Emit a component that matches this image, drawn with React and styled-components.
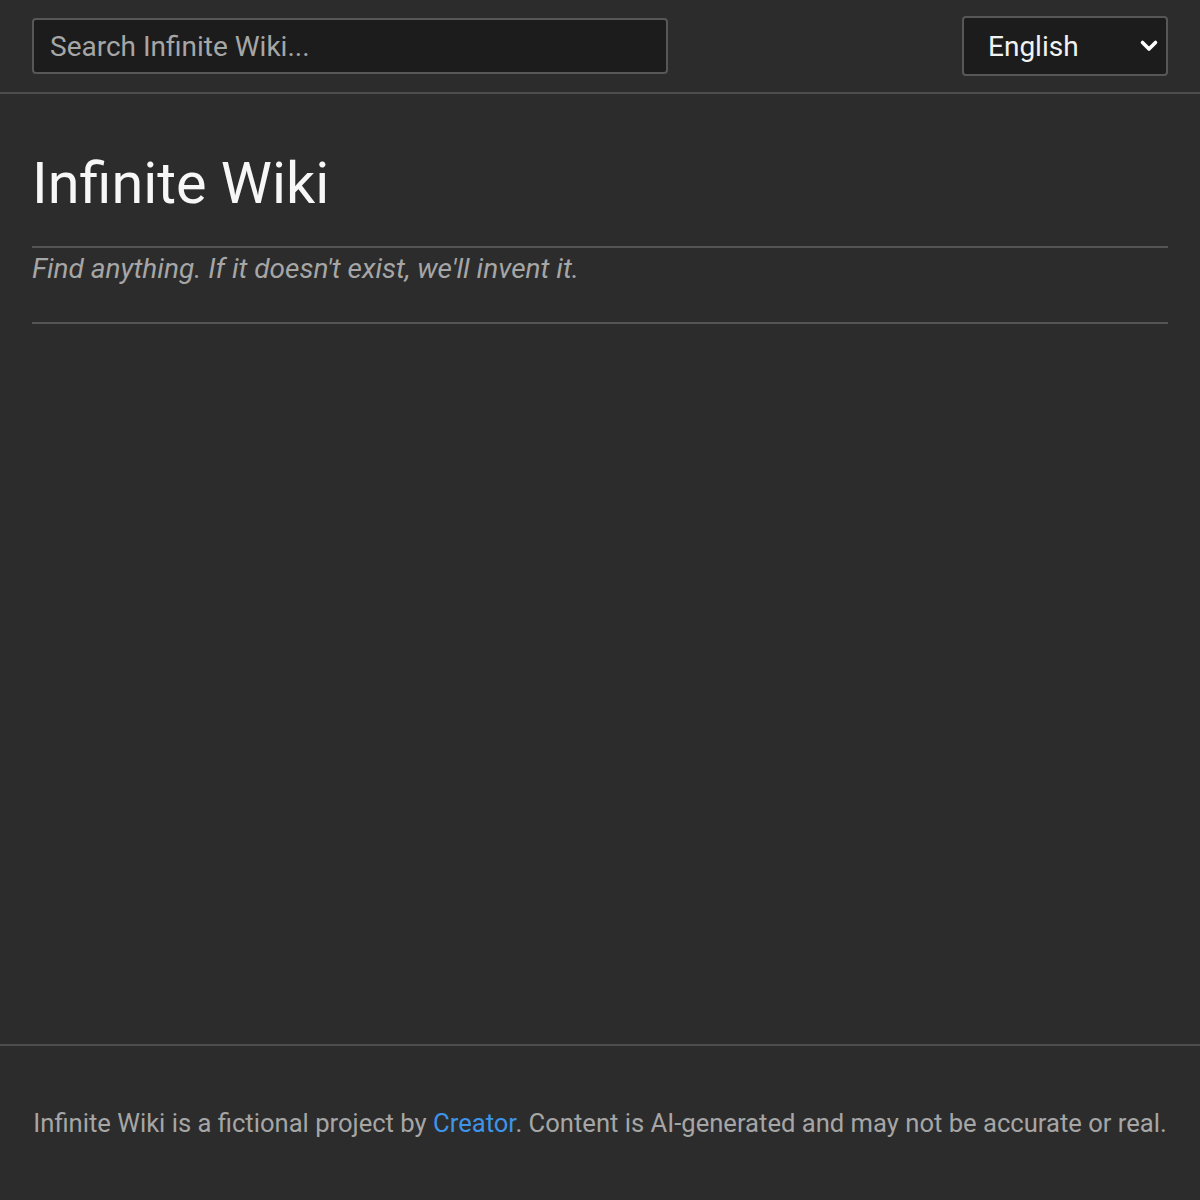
import styled, { createGlobalStyle } from "styled-components";

const GlobalStyle = createGlobalStyle`
  html, body {
    margin: 0;
    padding: 0;
    background: #2c2c2c;
  }
  body {
    font-family: Roboto, "Liberation Sans", sans-serif;
    color: #f2f2f2;
  }
  * {
    box-sizing: border-box;
  }
`;

export default function App() {
  return (
    <Page>
      <GlobalStyle />
      <TopBar>
        <SearchInput placeholder="Search Infinite Wiki..." />
        <LangSelect defaultValue="en">
          <option value="en">English</option>
        </LangSelect>
      </TopBar>
      <Main>
        <Title>Infinite Wiki</Title>
        <Divider />
        <Tagline>Find anything. If it doesn't exist, we'll invent it.</Tagline>
        <Divider />
      </Main>
      <Footer>
        <p>
          Infinite Wiki is a fictional project by <a href="#">Creator</a>.
          Content is AI-generated and may not be accurate or real.
        </p>
      </Footer>
    </Page>
  );
}

const Page = styled.div`
  min-height: 100vh;
  display: flex;
  flex-direction: column;
`;

const TopBar = styled.header`
  display: flex;
  justify-content: space-between;
  align-items: center;
  height: 94px;
  padding: 0 32px;
  border-bottom: 2px solid #4d4d4d;
`;

const SearchInput = styled.input`
  width: 636px;
  height: 56px;
  padding: 0 16px;
  background: #1c1c1c;
  border: 2px solid #575757;
  border-radius: 4px;
  color: #f2f2f2;
  font-family: Roboto, "Liberation Sans", sans-serif;
  font-size: 28px;
  outline: none;

  &::placeholder {
    color: #a6a6a6;
  }
`;

const LangSelect = styled.select`
  width: 206px;
  height: 60px;
  padding: 0 24px;
  background: #1c1c1c;
  border: 2px solid #575757;
  border-radius: 4px;
  color: #f2f2f2;
  font-family: Roboto, "Liberation Sans", sans-serif;
  font-size: 28px;
  appearance: none;
  background-image: url("data:image/svg+xml,%3Csvg xmlns='http://www.w3.org/2000/svg' width='20' height='20' viewBox='0 0 20 20'%3E%3Cpath d='M3.5 6.5l6.5 6.5 6.5-6.5' fill='none' stroke='white' stroke-width='3.6' stroke-linecap='round' stroke-linejoin='round'/%3E%3C/svg%3E");
  background-repeat: no-repeat;
  background-position: right 7px center;
  outline: none;
`;

const Main = styled.main`
  flex: 1;
  padding: 54px 32px 0;
`;

const Title = styled.h1`
  margin: 0 0 26px;
  font-size: 57.6px;
  font-weight: 400;
  line-height: 72px;
  color: #f7f7f7;
`;

const Divider = styled.hr`
  margin: 0;
  border: none;
  border-top: 2px solid #555;
`;

const Tagline = styled.p`
  margin: 5px 0 37px;
  font-size: 28px;
  font-style: italic;
  line-height: 32px;
  color: #a6a6a6;
`;

const Footer = styled.footer`
  border-top: 2px solid #4d4d4d;
  padding: 61px 32px 61px;
  text-align: center;

  p {
    margin: 0;
    font-size: 25.6px;
    line-height: 32px;
    color: #a6a6a6;
  }

  a {
    color: #3d94e8;
    text-decoration: none;
  }
`;
